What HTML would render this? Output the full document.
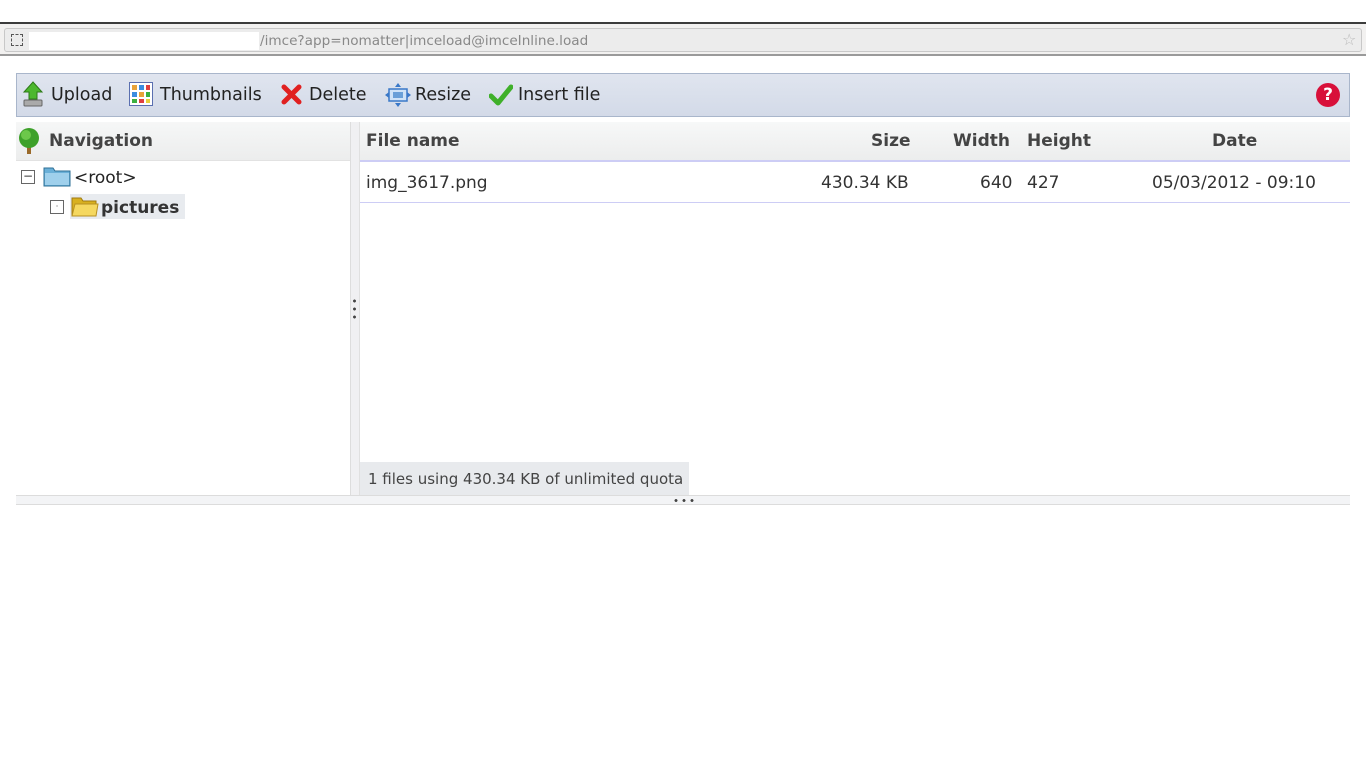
<!DOCTYPE html>
<html><head><meta charset="utf-8"><style>
*{box-sizing:border-box;margin:0;padding:0}
body{width:1366px;height:768px;background:#fff;font-family:"DejaVu Sans","Liberation Sans",sans-serif;color:#333;position:relative;overflow:hidden}
.abs{position:absolute}
.tb span.t{position:absolute;top:85px;font-size:17.5px;color:#222}
.hd{font-weight:bold;font-size:17px;color:#444;position:absolute;top:131px}
.cell{position:absolute;top:173px;font-size:17px;color:#333}
</style></head><body>
<div class="abs" style="left:0;top:22px;width:1366px;height:2px;background:#3c3c3c"></div>
<div class="abs" style="left:0;top:24px;width:1366px;height:32px;background:#f2f1f0;border-bottom:2px solid #9a9a9a"></div>
<div class="abs" style="left:4px;top:28px;width:1358px;height:24px;background:#ececec;border:1px solid #c8c8c8;border-radius:3px"></div>
<div class="abs" style="left:11px;top:34px;width:12px;height:12px;border:1px dashed #555"></div>
<div class="abs" style="left:29px;top:32px;width:230px;height:18px;background:#fff"></div>
<div class="abs" style="left:260px;top:33px;font-size:13.6px;color:#888">/imce?app=nomatter|imceload@imceInline.load</div>
<div class="abs" style="left:1342px;top:30px;font-size:16px;color:#bbb">☆</div>

<div class="abs tb" style="left:16px;top:73px;width:1334px;height:44px;background:linear-gradient(#e0e5ef,#d3dae8);border:1px solid #a9b6cb">
</div>
<div class="tb">
<svg class="abs" style="left:22px;top:81px" width="22" height="26" viewBox="0 0 22 26"><path d="M11 1 L20 11 L15 11 L15 18 L7 18 L7 11 L2 11 Z" fill="#4db82e" stroke="#2d7a18"/><rect x="2" y="19" width="18" height="6" rx="1" fill="#aaa" stroke="#666"/></svg>
<span class="t" style="left:51px">Upload</span>
<svg class="abs" style="left:129px;top:82px" width="24" height="24" viewBox="0 0 24 24"><rect x="0.5" y="0.5" width="23" height="23" fill="#fff" stroke="#5a6fb0"/><g><rect x="3" y="3" width="5" height="5" fill="#e8a33a"/><rect x="10" y="3" width="5" height="5" fill="#3b8de0"/><rect x="17" y="3" width="4" height="5" fill="#e04040"/><rect x="3" y="10" width="5" height="5" fill="#3b8de0"/><rect x="10" y="10" width="5" height="5" fill="#e8a33a"/><rect x="17" y="10" width="4" height="5" fill="#3bb040"/><rect x="3" y="17" width="5" height="4" fill="#3bb040"/><rect x="10" y="17" width="5" height="4" fill="#e04040"/><rect x="17" y="17" width="4" height="4" fill="#e8d03a"/></g></svg>
<span class="t" style="left:160px">Thumbnails</span>
<svg class="abs" style="left:281px;top:84px" width="21" height="21" viewBox="0 0 21 21"><path d="M3 3 L18 18 M18 3 L3 18" stroke="#e02020" stroke-width="5" stroke-linecap="round"/></svg>
<span class="t" style="left:309px">Delete</span>
<svg class="abs" style="left:385px;top:83px" width="26" height="24" viewBox="0 0 26 24"><rect x="4" y="6" width="18" height="12" fill="#cfe3f7" stroke="#3a78c8" stroke-width="1.5"/><rect x="8" y="9" width="10" height="6" fill="#6aa0d8"/><path d="M13 0 L10 4 L16 4Z M13 24 L10 20 L16 20Z M0 12 L4 9 L4 15Z M26 12 L22 9 L22 15Z" fill="#3a78c8"/></svg>
<span class="t" style="left:415px">Resize</span>
<svg class="abs" style="left:489px;top:84px" width="24" height="22" viewBox="0 0 24 22"><path d="M2 12 L9 19 L22 3" stroke="#3fb02a" stroke-width="5" fill="none" stroke-linecap="round" stroke-linejoin="round"/></svg>
<span class="t" style="left:518px">Insert file</span>
<div class="abs" style="left:1316px;top:83px;width:24px;height:24px;border-radius:50%;background:#d8103a;color:#fff;font-weight:bold;font-size:17px;text-align:center;line-height:24px">?</div>
</div>

<!-- nav -->
<div class="abs" style="left:16px;top:122px;width:334px;height:373px;background:#fff"></div>
<div class="abs" style="left:16px;top:122px;width:334px;height:39px;background:linear-gradient(#f6f7f7,#eceded);border-bottom:1px solid #e2e2e2"></div>
<svg class="abs" style="left:16px;top:127px" width="26" height="28" viewBox="0 0 26 28"><rect x="11" y="17" width="4" height="10" fill="#9a6a2a"/><circle cx="13" cy="11" r="10" fill="#3ea12a"/><circle cx="10" cy="8" r="5" fill="#6cc84a"/></svg>
<div class="hd" style="left:49px">Navigation</div>
<div class="abs" style="left:21px;top:170px;width:14px;height:14px;border:1px solid #666;background:#fff;font-size:12px;line-height:11px;text-align:center">−</div>
<svg class="abs" style="left:43px;top:165px" width="28" height="22" viewBox="0 0 28 22"><path d="M1 3 L10 3 L12 6 L27 6 L27 21 L1 21Z" fill="#6ab0d8" stroke="#2e6f96"/><rect x="2" y="8" width="24" height="12" fill="#9fd0ec"/></svg>
<div class="abs" style="left:74px;top:168px;font-size:17px;color:#222">&lt;root&gt;</div>
<div class="abs" style="left:50px;top:200px;width:14px;height:14px;border:1px solid #666;background:#fff;font-size:8px;line-height:12px;text-align:center">·</div>
<div class="abs" style="left:70px;top:194px;width:115px;height:25px;background:#e8ebef"></div>
<svg class="abs" style="left:71px;top:195px" width="28" height="22" viewBox="0 0 28 22"><path d="M1 3 L10 3 L12 6 L25 6 L25 21 L1 21Z" fill="#d8b020" stroke="#a07a10"/><path d="M4 9 L27 9 L25 21 L1 21Z" fill="#f5d860" stroke="#b89020"/></svg>
<div class="abs" style="left:101px;top:198px;font-size:17px;font-weight:bold;color:#333">pictures</div>

<!-- vertical splitter -->
<div class="abs" style="left:350px;top:122px;width:10px;height:373px;background:#f0f0f2;border-left:1px solid #ddd;border-right:1px solid #e0e0e0"></div>
<div class="abs" style="left:353px;top:297px;width:3px;height:22px;background:radial-gradient(circle,#444 1.3px,transparent 1.6px) 0 0/3px 8px"></div>

<!-- file list -->
<div class="abs" style="left:360px;top:122px;width:990px;height:40px;background:linear-gradient(#f7f8f8,#eceded);border-bottom:2px solid #cdcdf5"></div>
<div class="hd" style="left:366px">File name</div>
<div class="hd" style="left:871px">Size</div>
<div class="hd" style="left:953px">Width</div>
<div class="hd" style="left:1027px">Height</div>
<div class="hd" style="left:1212px">Date</div>
<div class="cell" style="left:366px">img_3617.png</div>
<div class="cell" style="left:821px">430.34 KB</div>
<div class="cell" style="left:980px">640</div>
<div class="cell" style="left:1027px">427</div>
<div class="cell" style="left:1152px">05/03/2012 - 09:10</div>
<div class="abs" style="left:360px;top:202px;width:990px;height:1px;background:#cdcdf5"></div>

<div class="abs" style="left:360px;top:462px;width:329px;height:33px;background:#e8eaed"></div>
<div class="abs" style="left:368px;top:470px;font-size:15px;color:#444">1 files using 430.34 KB of unlimited quota</div>

<div class="abs" style="left:16px;top:495px;width:1334px;height:10px;background:#f3f4f6;border-top:1px solid #dcdcdc;border-bottom:1px solid #dcdcdc"></div>
<div class="abs" style="left:672px;top:499px;width:24px;height:3px;background:radial-gradient(circle,#444 1.3px,transparent 1.6px) 0 0/8px 3px"></div>
</body></html>
